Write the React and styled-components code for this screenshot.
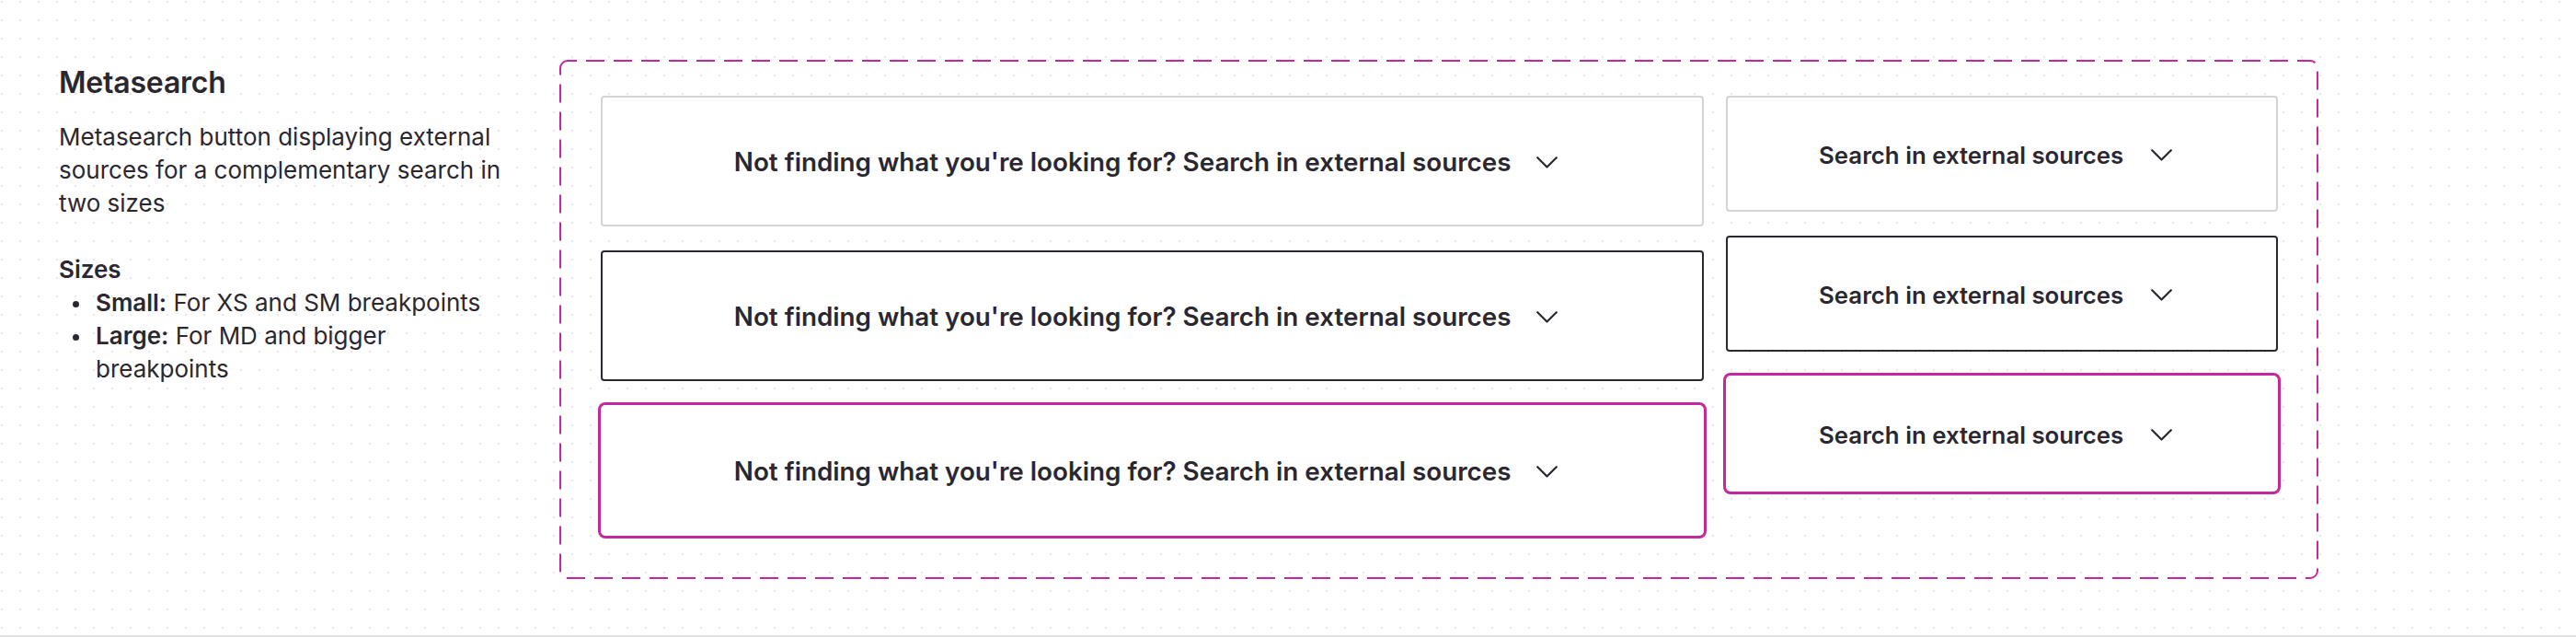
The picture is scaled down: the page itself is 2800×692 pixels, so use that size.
import React from "react";
import styled, { createGlobalStyle, css } from "styled-components";

const MAGENTA = "#c4289f";
const INK = "#2b2730";

const GlobalStyle = createGlobalStyle`
  html, body {
    margin: 0;
    padding: 0;
  }
  body {
    background-color: #ffffff;
    background-image: radial-gradient(circle, #e6e6e6 1.1px, transparent 1.6px);
    background-size: 20px 20px;
    background-position: -8px -8px;
    font-family: Inter, "Noto Sans", "Liberation Sans", sans-serif;
    color: ${INK};
  }
  * { box-sizing: border-box; }
`;

const Frame = styled.div`
  height: 692px;
  border-bottom: 2px solid #e3e3e3;
  display: flex;
  align-items: flex-start;
  gap: 54px;
  padding: 65px 0 0 64px;
`;

const Intro = styled.aside`
  width: 490px;
  padding-top: 5px;
`;

const Title = styled.h2`
  margin: 0 0 21px;
  font-size: 32px;
  line-height: 40px;
  font-weight: 600;
  letter-spacing: -0.2px;
`;

const Text = styled.p`
  margin: 0 0 36px;
  font-size: 26px;
  line-height: 36px;
  font-weight: 400;
`;

const SubTitle = styled.h3`
  margin: 0;
  font-size: 26px;
  line-height: 36px;
  font-weight: 600;
`;

const List = styled.ul`
  margin: 0;
  padding-left: 15px;
  list-style: none;
  font-size: 26px;
  line-height: 36px;
  strong { font-weight: 600; }
`;

const Item = styled.li`
  display: flex;
  align-items: flex-start;
  gap: 18px;
  &::before {
    content: "";
    flex: none;
    width: 7px;
    height: 7px;
    margin-top: 16px;
    border-radius: 50%;
    background: ${INK};
  }
`;

const Showcase = styled.section`
  position: relative;
  width: 1912px;
  height: 564px;
  padding: 39px 44px 0 45px;
  display: flex;
  align-items: flex-start;
  gap: 24px;
`;

const DashOutline = styled.svg`
  position: absolute;
  inset: 0;
  width: 100%;
  height: 100%;
  overflow: visible;
  pointer-events: none;
  rect {
    width: calc(100% - 2px);
    height: calc(100% - 2px);
  }
`;

const Column = styled.div`
  display: flex;
  flex-direction: column;
  gap: 26px;
  width: ${(p) => (p.$size === "large" ? "1200px" : "600px")};
`;

const variants = {
  default: css`
    border: 2px solid #d4d4d4;
  `,
  hover: css`
    border: 2px solid ${INK};
  `,
  focus: css`
    border: 2px solid transparent;
    box-shadow: 0 0 0 3px ${MAGENTA};
    border-radius: 5px;
  `,
};

const MetaButton = styled.button`
  display: flex;
  align-items: center;
  justify-content: center;
  gap: ${(p) => (p.$size === "large" ? "28px" : "30px")};
  width: 100%;
  height: ${(p) => (p.$size === "large" ? "142px" : "126px")};
  padding: 2px 14px 0 0;
  background: #ffffff;
  border-radius: 4px;
  font-family: Inter, "Noto Sans", "Liberation Sans", sans-serif;
  font-size: ${(p) => (p.$size === "large" ? "27.8px" : "25.8px")};
  font-weight: 600;
  color: ${INK};
  cursor: pointer;
  ${(p) => variants[p.$variant]}
`;

const Chevron = () => (
  <svg width="23" height="13" viewBox="0 0 23 13" fill="none" aria-hidden="true">
    <polyline
      points="1.2,1.2 11.5,11.5 21.8,1.2"
      stroke={INK}
      strokeWidth="2.2"
      strokeLinecap="round"
      strokeLinejoin="round"
    />
  </svg>
);

const LARGE = "Not finding what you're looking for? Search in external sources";
const SMALL = "Search in external sources";
const STATES = ["default", "hover", "focus"];

export default function App() {
  return (
    <>
      <GlobalStyle />
      <Frame>
        <Intro>
          <Title>Metasearch</Title>
          <Text>
            Metasearch button displaying external sources for a complementary
            search in two sizes
          </Text>
          <SubTitle>Sizes</SubTitle>
          <List>
            <Item>
              <span>
                <strong>Small:</strong> For XS and SM breakpoints
              </span>
            </Item>
            <Item>
              <span>
                <strong>Large:</strong> For MD and bigger breakpoints
              </span>
            </Item>
          </List>
        </Intro>
        <Showcase>
          <DashOutline aria-hidden="true">
            <rect
              x="1"
              y="1"
              rx="8"
              ry="8"
              fill="none"
              stroke={MAGENTA}
              strokeWidth="2"
              strokeDasharray="20 10"
              strokeDashoffset="10"
            />
          </DashOutline>
          <Column $size="large">
            {STATES.map((s) => (
              <MetaButton key={s} $size="large" $variant={s}>
                <span>{LARGE}</span>
                <Chevron />
              </MetaButton>
            ))}
          </Column>
          <Column $size="small">
            {STATES.map((s) => (
              <MetaButton key={s} $size="small" $variant={s}>
                <span>{SMALL}</span>
                <Chevron />
              </MetaButton>
            ))}
          </Column>
        </Showcase>
      </Frame>
    </>
  );
}
